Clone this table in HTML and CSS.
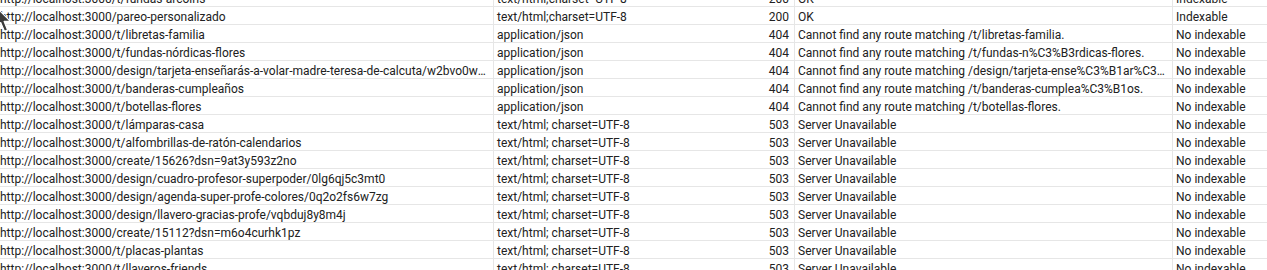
FILE: index.html
```html
<!DOCTYPE html>
<html lang="es">
<head>
<meta charset="UTF-8">
<title>Crawl results</title>
<link rel="stylesheet" href="styles.css">
</head>
<body>
<div class="sheet">
  <div class="row"><div class="c url">http://localhost:3000/t/fundas-arcoiris</div><div class="c type">text/html;charset=UTF-8</div><div class="c code">200</div><div class="c msg">OK</div><div class="c idx">Indexable</div></div>
  <div class="row"><div class="c url">http://localhost:3000/pareo-personalizado</div><div class="c type">text/html;charset=UTF-8</div><div class="c code">200</div><div class="c msg">OK</div><div class="c idx">Indexable</div></div>
  <div class="row"><div class="c url">http://localhost:3000/t/libretas-familia</div><div class="c type">application/json</div><div class="c code">404</div><div class="c msg">Cannot find any route matching /t/libretas-familia.</div><div class="c idx">No indexable</div></div>
  <div class="row"><div class="c url">http://localhost:3000/t/fundas-nórdicas-flores</div><div class="c type">application/json</div><div class="c code">404</div><div class="c msg">Cannot find any route matching /t/fundas-n%C3%B3rdicas-flores.</div><div class="c idx">No indexable</div></div>
  <div class="row"><div class="c url">http://localhost:3000/design/tarjeta-enseñarás-a-volar-madre-teresa-de-calcuta/w2bvo0wxk3</div><div class="c type">application/json</div><div class="c code">404</div><div class="c msg">Cannot find any route matching /design/tarjeta-ense%C3%B1ar%C3%A1s-a-volar</div><div class="c idx">No indexable</div></div>
  <div class="row"><div class="c url">http://localhost:3000/t/banderas-cumpleaños</div><div class="c type">application/json</div><div class="c code">404</div><div class="c msg">Cannot find any route matching /t/banderas-cumplea%C3%B1os.</div><div class="c idx">No indexable</div></div>
  <div class="row"><div class="c url">http://localhost:3000/t/botellas-flores</div><div class="c type">application/json</div><div class="c code">404</div><div class="c msg">Cannot find any route matching /t/botellas-flores.</div><div class="c idx">No indexable</div></div>
  <div class="row"><div class="c url">http://localhost:3000/t/lámparas-casa</div><div class="c type">text/html; charset=UTF-8</div><div class="c code">503</div><div class="c msg">Server Unavailable</div><div class="c idx">No indexable</div></div>
  <div class="row"><div class="c url">http://localhost:3000/t/alfombrillas-de-ratón-calendarios</div><div class="c type">text/html; charset=UTF-8</div><div class="c code">503</div><div class="c msg">Server Unavailable</div><div class="c idx">No indexable</div></div>
  <div class="row"><div class="c url">http://localhost:3000/create/15626?dsn=9at3y593z2no</div><div class="c type">text/html; charset=UTF-8</div><div class="c code">503</div><div class="c msg">Server Unavailable</div><div class="c idx">No indexable</div></div>
  <div class="row"><div class="c url">http://localhost:3000/design/cuadro-profesor-superpoder/0lg6qj5c3mt0</div><div class="c type">text/html; charset=UTF-8</div><div class="c code">503</div><div class="c msg">Server Unavailable</div><div class="c idx">No indexable</div></div>
  <div class="row"><div class="c url">http://localhost:3000/design/agenda-super-profe-colores/0q2o2fs6w7zg</div><div class="c type">text/html; charset=UTF-8</div><div class="c code">503</div><div class="c msg">Server Unavailable</div><div class="c idx">No indexable</div></div>
  <div class="row"><div class="c url">http://localhost:3000/design/llavero-gracias-profe/vqbduj8y8m4j</div><div class="c type">text/html; charset=UTF-8</div><div class="c code">503</div><div class="c msg">Server Unavailable</div><div class="c idx">No indexable</div></div>
  <div class="row"><div class="c url">http://localhost:3000/create/15112?dsn=m6o4curhk1pz</div><div class="c type">text/html; charset=UTF-8</div><div class="c code">503</div><div class="c msg">Server Unavailable</div><div class="c idx">No indexable</div></div>
  <div class="row"><div class="c url">http://localhost:3000/t/placas-plantas</div><div class="c type">text/html; charset=UTF-8</div><div class="c code">503</div><div class="c msg">Server Unavailable</div><div class="c idx">No indexable</div></div>
  <div class="row"><div class="c url">http://localhost:3000/t/llaveros-friends</div><div class="c type">text/html; charset=UTF-8</div><div class="c code">503</div><div class="c msg">Server Unavailable</div><div class="c idx">No indexable</div></div>
</div>
<svg class="cursor" width="16" height="26" viewBox="0 0 16 26" aria-hidden="true">
  <path d="M1 1 L1 19 L5.2 15 L8.6 23 L11.4 21.8 L8.2 14 L14 14 Z" fill="#3a3a3a" stroke="#ffffff" stroke-width="1" stroke-linejoin="round"/>
</svg>
</body>
</html>
```

FILE: styles.css
```css
html, body {
  margin: 0;
  padding: 0;
  background: #ffffff;
  overflow: hidden;
}

body {
  font-family: Roboto, "Noto Sans", "Liberation Sans", sans-serif;
  font-size: 12px;
  color: #212121;
  position: relative;
  height: 270px;
}

.sheet {
  margin-top: -11px;
  display: flex;
  flex-direction: column;
}

.row {
  display: grid;
  grid-template-columns: 494px 210px 91px 378px 1fr;
  height: 18px;
  border-bottom: 1px solid #e6e6e6;
  box-sizing: border-box;
}

.c {
  box-sizing: border-box;
  line-height: 18px;
  padding-top: 1px;
  white-space: nowrap;
  overflow: hidden;
  text-overflow: ellipsis;
}

.url {
  padding-right: 6px;
  border-right: 1px solid #e6e6e6;
}

.type {
  padding-left: 3px;
}

.code {
  text-align: right;
  padding-right: 5px;
  border-right: 1px solid #e6e6e6;
}

.msg {
  padding-left: 3px;
  padding-right: 6px;
  border-right: 1px solid #e6e6e6;
}

.idx {
  padding-left: 3px;
}

.cursor {
  position: absolute;
  z-index: 2;
  left: -5px;
  top: 6px;
  transform: scale(1.1);
  transform-origin: 0 0;
}
```
